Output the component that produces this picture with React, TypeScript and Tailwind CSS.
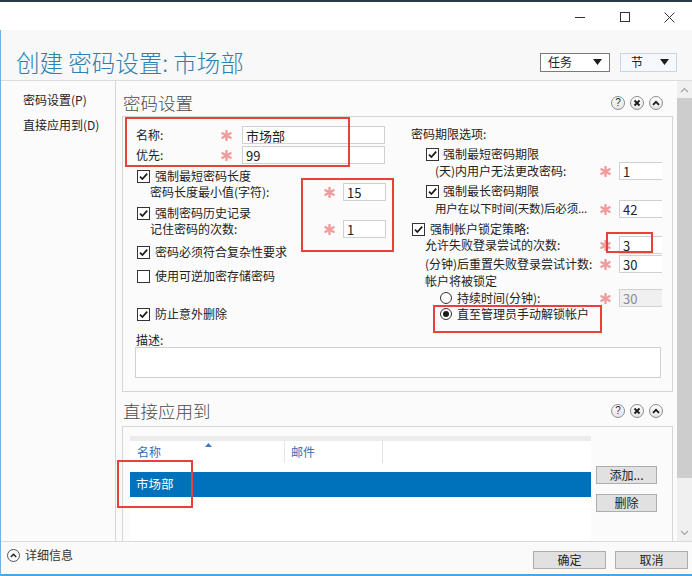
import React from 'react';

// pink required-field asterisk
const Star = () => (
  <svg width="11" height="11" viewBox="0 0 12 12" className="shrink-0">
    <g stroke="#f09c9c" strokeWidth="2.6" strokeLinecap="round">
      <line x1="6" y1="1" x2="6" y2="11" />
      <line x1="1.6" y1="3.5" x2="10.4" y2="8.5" />
      <line x1="1.6" y1="8.5" x2="10.4" y2="3.5" />
    </g>
  </svg>
);

const Check = ({ on }: { on: boolean }) => (
  <span className="w-[13px] h-[13px] shrink-0 border border-[#333] bg-white flex items-center justify-center">
    {on && (
      <svg width="11" height="11" viewBox="0 0 11 11">
        <path d="M2 5.6l2.4 2.5L9.2 2.6" fill="none" stroke="#1a1a1a" strokeWidth="1.7" />
      </svg>
    )}
  </span>
);

const Radio = ({ on }: { on: boolean }) => (
  <span className="w-[12px] h-[12px] shrink-0 rounded-full border border-[#333] bg-white flex items-center justify-center">
    {on && <span className="w-[6px] h-[6px] rounded-full bg-[#1a1a1a]" />}
  </span>
);

const Field = ({ v, className }: { v: string; className: string }) => (
  <div className={`h-[18px] shrink-0 border border-[#d0d0d0] flex items-center pl-[3px] text-[13px] leading-none ${className}`}>
    {v}
  </div>
);

const RoundIcon = ({ kind }: { kind: 'help' | 'close' | 'up' }) => (
  <span className="w-[14px] h-[14px] rounded-full border border-[#8c8c8c] bg-gradient-to-b from-white to-[#e4e4e4] flex items-center justify-center">
    {kind === 'help' && <span className="text-[10px] leading-none text-[#222] font-['Liberation_Sans',sans-serif]">?</span>}
    {kind === 'close' && (
      <svg width="8" height="8" viewBox="0 0 8 8">
        <path d="M1.5 1.5l5 5M6.5 1.5l-5 5" stroke="#1a1a1a" strokeWidth="1.8" />
      </svg>
    )}
    {kind === 'up' && (
      <svg width="8" height="6" viewBox="0 0 8 6">
        <path d="M1 4.8L4 1.8l3 3" fill="none" stroke="#1a1a1a" strokeWidth="1.7" />
      </svg>
    )}
  </span>
);

const SectionHead = ({ title, className }: { title: string; className: string }) => (
  <div className={`ml-[6px] w-[551px] pl-[1px] pr-[10px] flex items-start justify-between ${className}`}>
    <span className="text-[17.5px] leading-[24px] font-light text-[#4b4b4b]">{title}</span>
    <div className="h-[24px] flex items-center gap-[5px]">
      <RoundIcon kind="help" />
      <RoundIcon kind="close" />
      <RoundIcon kind="up" />
    </div>
  </div>
);

const Triangle = () => (
  <svg width="9" height="6" viewBox="0 0 9 6">
    <path d="M0 0h9L4.5 6z" fill="#1e1e1e" />
  </svg>
);

const Btn = ({ label, className }: { label: string; className: string }) => (
  <div className={`h-[18px] border border-[#adadad] bg-[#e1e1e1] flex items-center justify-center text-[12px] leading-none ${className}`}>
    {label}
  </div>
);

export default function App() {
  return (
    <div className="relative w-[692px] h-[576px] overflow-hidden bg-white text-[12px] leading-none text-[#222] font-['Noto_Sans_CJK_SC','Noto_Sans',sans-serif]">
      <div className="h-[2px] bg-[#2c3b4a]" />

      {/* title bar */}
      <div className="h-[28px] flex justify-end items-center pt-[2px]">
        <div className="w-[45px] flex justify-center">
          <span className="w-[10px] h-[1px] bg-[#333]" />
        </div>
        <div className="w-[45px] flex justify-center">
          <span className="w-[10px] h-[10px] border border-[#333]" />
        </div>
        <div className="w-[45px] flex justify-center">
          <svg width="11" height="11" viewBox="0 0 11 11">
            <path d="M0.5 0.5l10 10M10.5 0.5l-10 10" stroke="#333" strokeWidth="1" />
          </svg>
        </div>
      </div>

      <div className="h-[546px] flex flex-col border-l border-[#6fb0e6]">
        {/* header */}
        <div className="h-[51px] shrink-0 border-b border-[#dcdcdc] bg-[#f8f8f8] flex items-center justify-between pt-[14px] pl-[15px] pr-[15px]">
          <span className="text-[23.5px] leading-[32px] font-light text-[#2f80ad]">创建 密码设置: 市场部</span>
          <div className="flex gap-[10px]">
            <div className="w-[70px] h-[19px] border border-[#7a7a7a] bg-white flex items-center justify-between pl-[7px] pr-[7px]">
              <span>任务</span>
              <Triangle />
            </div>
            <div className="w-[57px] h-[19px] border border-[#c9d4e6] bg-[#f6f8fb] flex items-center justify-between pl-[10px] pr-[7px]">
              <span>节</span>
              <Triangle />
            </div>
          </div>
        </div>

        {/* body */}
        <div className="h-[460px] shrink-0 flex bg-[#fbfbfb]">
          <div className="w-[115px] shrink-0 border-r border-[#d6d6d6] pt-[6px] pl-[22px]">
            <div className="h-[25px] flex items-center">密码设置(P)</div>
            <div className="h-[25px] flex items-center">直接应用到(D)</div>
          </div>

          <div className="flex-1 overflow-hidden">
            <SectionHead title="密码设置" className="h-[35px] pt-[10px]" />

            <div className="ml-[6px] w-[551px] border border-[#d6d6d6] pb-[13px]">
              <div className="flex">
                {/* left column */}
                <div className="w-[277px] shrink-0 pt-[10px]">
                  <div className="h-[16px] flex items-center pl-[13px]">
                    <span className="w-[85px]">名称:</span>
                    <span className="w-[21px]"><Star /></span>
                    <Field v="市场部" className="w-[143px] bg-white" />
                  </div>
                  <div className="mt-[4px] h-[16px] flex items-center pl-[13px]">
                    <span className="w-[85px]">优先:</span>
                    <span className="w-[21px]"><Star /></span>
                    <Field v="99" className="w-[143px] bg-white" />
                  </div>
                  <div className="mt-[5px] h-[16px] flex items-center gap-[5px] pl-[14px]">
                    <Check on />
                    <span>强制最短密码长度</span>
                  </div>
                  <div className="h-[16px] flex items-center pl-[27px]">
                    <span className="w-[174px]">密码长度最小值(字符):</span>
                    <span className="w-[19px]"><Star /></span>
                    <Field v="15" className="w-[43px] bg-white" />
                  </div>
                  <div className="mt-[5px] h-[16px] flex items-center gap-[5px] pl-[14px]">
                    <Check on />
                    <span>强制密码历史记录</span>
                  </div>
                  <div className="h-[16px] flex items-center pl-[27px]">
                    <span className="w-[174px]">记住密码的次数:</span>
                    <span className="w-[19px]"><Star /></span>
                    <Field v="1" className="w-[43px] bg-white" />
                  </div>
                  <div className="mt-[7px] h-[16px] flex items-center gap-[5px] pl-[14px]">
                    <Check on />
                    <span>密码必须符合复杂性要求</span>
                  </div>
                  <div className="mt-[8px] h-[16px] flex items-center gap-[5px] pl-[14px]">
                    <Check on={false} />
                    <span>使用可逆加密存储密码</span>
                  </div>
                  <div className="mt-[22px] h-[16px] flex items-center gap-[5px] pl-[14px]">
                    <Check on />
                    <span>防止意外删除</span>
                  </div>
                </div>

                {/* right column */}
                <div className="flex-1 pt-[9px]">
                  <div className="h-[16px] flex items-center pl-[11px]">密码期限选项:</div>
                  <div className="mt-[4px] h-[16px] flex items-center gap-[4px] pl-[26px]">
                    <Check on />
                    <span>强制最短密码期限</span>
                  </div>
                  <div className="mt-[1px] h-[16px] flex items-center pl-[35px]">
                    <span className="w-[165px] whitespace-nowrap">(天)内用户无法更改密码:</span>
                    <span className="w-[19px]"><Star /></span>
                    <Field v="1" className="w-[43px] border-r-0 bg-white" />
                  </div>
                  <div className="mt-[4px] h-[16px] flex items-center gap-[4px] pl-[26px]">
                    <Check on />
                    <span>强制最长密码期限</span>
                  </div>
                  <div className="mt-[2px] h-[16px] flex items-center pl-[35px]">
                    <span className="w-[165px] whitespace-nowrap text-[11.5px] tracking-[-0.2px]">用户在以下时间(天数)后必须...</span>
                    <span className="w-[19px]"><Star /></span>
                    <Field v="42" className="w-[43px] border-r-0 bg-white" />
                  </div>
                  <div className="mt-[4px] h-[16px] flex items-center gap-[5px] pl-[12px]">
                    <Check on />
                    <span>强制帐户锁定策略:</span>
                  </div>
                  <div className="h-[16px] flex items-center pl-[25px]">
                    <span className="w-[175px]">允许失败登录尝试的次数:</span>
                    <span className="w-[19px]"><Star /></span>
                    <Field v="3" className="w-[43px] border-r-0 bg-white" />
                  </div>
                  <div className="mt-[3px] h-[16px] flex items-center pl-[25px]">
                    <span className="w-[175px]">(分钟)后重置失败登录尝试计数:</span>
                    <span className="w-[19px]"><Star /></span>
                    <Field v="30" className="w-[43px] border-r-0 bg-white" />
                  </div>
                  <div className="mt-[1px] h-[16px] flex items-center pl-[25px]">帐户将被锁定</div>
                  <div className="mt-[1px] h-[16px] flex items-center pl-[40px]">
                    <span className="w-[160px] flex items-center gap-[5px]">
                      <Radio on={false} />
                      <span>持续时间(分钟):</span>
                    </span>
                    <span className="w-[19px]"><Star /></span>
                    <Field v="30" className="w-[43px] border-r-0 bg-[#f0f0f0] text-[#8a8a8a]" />
                  </div>
                  <div className="h-[16px] flex items-center gap-[5px] pl-[40px]">
                    <Radio on />
                    <span>直至管理员手动解锁帐户</span>
                  </div>
                </div>
              </div>

              <div className="mt-[10px] h-[15px] flex items-center pl-[13px]">描述:</div>
              <div className="ml-[12px] w-[526px] h-[31px] bg-white border border-[#d0d0d0]" />
            </div>

            <SectionHead title="直接应用到" className="h-[34px] pt-[7px]" />

            <div className="ml-[6px] w-[551px] h-[200px] border border-[#d6d6d6] flex pt-[9px] pl-[7px]">
              <div className="w-[461px] h-[160px] bg-white">
                <div className="h-[5px] bg-[#ececec]" />
                <div className="h-[22px] flex text-[#3470b8]">
                  <div className="relative w-[155px] border-r border-[#e4e4e4] pl-[7px] flex items-center">
                    名称
                    <svg width="7" height="4" viewBox="0 0 7 4" className="absolute left-[75px] top-[2px]">
                      <path d="M0 4L3.5 0 7 4z" fill="#3f78c0" />
                    </svg>
                  </div>
                  <div className="w-[98px] border-r border-[#e4e4e4] pl-[6px] flex items-center">邮件</div>
                </div>
                <div className="h-[9px]" />
                <div className="h-[25px] bg-[#0072bc] text-white text-[12.5px] pl-[6px] flex items-center">市场部</div>
              </div>
              <div className="ml-[5px] mt-[30px] flex flex-col gap-[10px]">
                <Btn label="添加..." className="w-[61px]" />
                <Btn label="删除" className="w-[61px]" />
              </div>
            </div>
          </div>

          {/* scrollbar */}
          <div className="w-[15px] shrink-0 bg-[#f0f0f0] flex flex-col">
            <div className="h-[17px] flex items-center justify-center">
              <svg width="9" height="6" viewBox="0 0 9 6">
                <path d="M1 5l3.5-3.5L8 5" fill="none" stroke="#a3a3a3" strokeWidth="1.2" />
              </svg>
            </div>
            <div className="h-[380px] bg-[#cdcdcd]" />
            <div className="flex-1" />
            <div className="h-[17px] flex items-center justify-center">
              <svg width="9" height="6" viewBox="0 0 9 6">
                <path d="M1 1l3.5 3.5L8 1" fill="none" stroke="#a3a3a3" strokeWidth="1.2" />
              </svg>
            </div>
          </div>
        </div>

        {/* footer */}
        <div className="h-[35px] shrink-0 border-t border-[#dadada] border-b-2 border-b-[#4ea3e4] bg-[#fafafa] flex justify-between">
          <div className="pl-[6px] pt-[5px] h-[21px] flex items-center gap-[5px]">
            <span className="w-[13px] h-[13px] rounded-full border border-[#555] flex items-center justify-center">
              <svg width="7" height="5" viewBox="0 0 7 5">
                <path d="M0.8 4L3.5 1.3 6.2 4" fill="none" stroke="#222" strokeWidth="1.5" />
              </svg>
            </span>
            <span className="text-[#333]">详细信息</span>
          </div>
          <div className="pr-[4px] pt-[9px] flex gap-[9px]">
            <Btn label="确定" className="w-[73px]" />
            <Btn label="取消" className="w-[73px]" />
          </div>
        </div>
      </div>

      {/* red annotation boxes */}
      <div className="absolute left-[125px] top-[117px] w-[225px] h-[50px] border-2 border-[#e8413b]" />
      <div className="absolute left-[301px] top-[178px] w-[93px] h-[74px] border-2 border-[#e8413b]" />
      <div className="absolute left-[606px] top-[232px] w-[47px] h-[21px] border-2 border-[#e8413b]" />
      <div className="absolute left-[433px] top-[305px] w-[169px] h-[28px] border-2 border-[#e8413b]" />
      <div className="absolute left-[117px] top-[460px] w-[76px] h-[48px] border-2 border-[#e8413b]" />
    </div>
  );
}
